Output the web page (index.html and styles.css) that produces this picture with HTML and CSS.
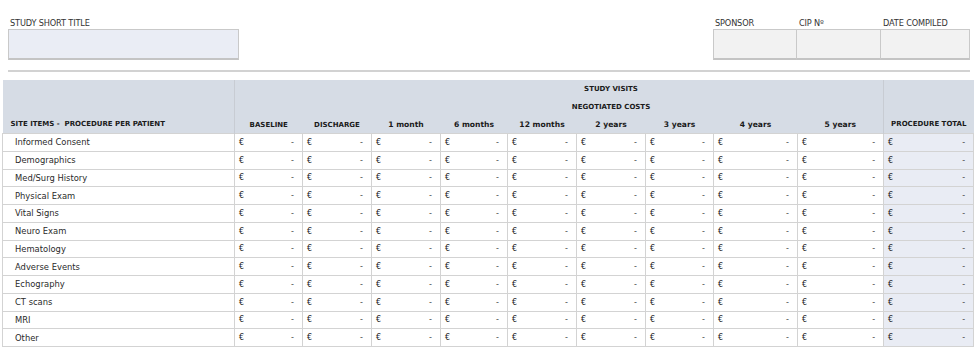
FILE: index.html
```html
<!DOCTYPE html>
<html>
<head>
<meta charset="utf-8">
<link rel="stylesheet" href="styles.css">
</head>
<body>
<div class="top">
  <div class="field title-field">
    <div class="label">STUDY SHORT TITLE</div>
    <div class="box title-box"></div>
  </div>
  <div class="meta">
    <div class="field">
      <div class="label">SPONSOR</div>
      <div class="box gray sponsor"></div>
    </div>
    <div class="field">
      <div class="label">CIP Nº</div>
      <div class="box gray cip"></div>
    </div>
    <div class="field">
      <div class="label">DATE COMPILED</div>
      <div class="box gray date"></div>
    </div>
  </div>
</div>
<div class="rule"></div>
<table class="costs">
  <colgroup>
    <col class="c-site">
    <col class="c68"><col class="c69"><col class="c69"><col class="c67"><col class="c69"><col class="c69"><col class="c68">
    <col class="c84"><col class="c86"><col class="c90">
  </colgroup>
  <thead>
    <tr class="h1">
      <th class="site-h" rowspan="3">SITE ITEMS -&nbsp; PROCEDURE PER PATIENT</th>
      <th class="group" colspan="9">STUDY VISITS</th>
      <th class="total-h" rowspan="3">PROCEDURE TOTAL</th>
    </tr>
    <tr class="h2">
      <th class="group" colspan="9">NEGOTIATED COSTS</th>
    </tr>
    <tr class="h3">
      <th>BASELINE</th><th>DISCHARGE</th><th class="lc">1 month</th><th class="lc">6 months</th><th class="lc">12 months</th><th class="lc">2 years</th><th class="lc">3 years</th><th class="lc">4 years</th><th class="lc">5 years</th>
    </tr>
  </thead>
  <tbody id="rows"></tbody>
</table>
<script src="app.js"></script>
</body>
</html>
```
FILE: app.js
```js
const items = ["Informed Consent","Demographics","Med/Surg History","Physical Exam","Vital Signs","Neuro Exam","Hematology","Adverse Events","Echography","CT scans","MRI","Other"];
const body = document.getElementById("rows");
items.forEach(name => {
  const tr = document.createElement("tr");
  let html = `<td class="item">${name}</td>`;
  for (let i = 0; i < 10; i++) {
    html += `<td class="money${i === 9 ? " total" : ""}"><span class="cur">€</span><span class="dash">-</span></td>`;
  }
  tr.innerHTML = html;
  body.appendChild(tr);
});
```
FILE: styles.css
```css
html, body {
  margin: 0;
  padding: 0;
  background: #fff;
}
body {
  font-family: "DejaVu Sans", "Liberation Sans", sans-serif;
  color: #2a2a2a;
}
.top {
  display: flex;
  justify-content: space-between;
  padding: 17px 10px 0 8px;
  height: 53px;
}
.label {
  font-size: 8.2px;
  line-height: 12px;
  padding-left: 2px;
  color: #333;
  letter-spacing: -0.15px;
}
.box {
  box-sizing: border-box;
  height: 31px;
  border: 1px solid #c9c9c9;
}
.title-box {
  width: 231px;
  background: #eaedf5;
  border-bottom: 2px solid #c4c4c4;
}
.meta {
  display: flex;
}
.gray {
  background: #f2f2f2;
  border-bottom: 2px solid #c4c4c4;
}
.meta .field + .field .box {
  border-left: none;
}
.sponsor { width: 84px; }
.cip { width: 84px; }
.date { width: 89px; }
.rule {
  margin: 0 10px 0 8px;
  height: 2px;
  background: #d2d2d2;
}
.costs {
  margin: 8px 0 0 2px;
  border-collapse: collapse;
  table-layout: fixed;
  width: 971px;
}
.c-site { width: 232px; }
.c68 { width: 68px; }
.c69 { width: 69px; }
.c67 { width: 67px; }
.c84 { width: 84px; }
.c86 { width: 86px; }
.c90 { width: 90px; }
thead th {
  background: #d6dce5;
  font-weight: bold;
  font-size: 7px;
  color: #1a1a1a;
  height: 18px;
  padding: 0;
  white-space: nowrap;
  text-align: center;
}
thead th.lc {
  font-size: 7.6px;
}
.h1 th, .h2 th { height: 18px; }
.h3 th { height: 17px; vertical-align: middle; }
th.site-h {
  text-align: left;
  vertical-align: bottom;
  padding: 0 0 5px 8px;
  border-right: 1px solid #c8ccd3;
}
th.total-h {
  vertical-align: bottom;
  padding-bottom: 5px;
  border-left: 1px solid #c8ccd3;
}
th.group {
  padding-left: 104px;
}
tbody td {
  border: 1px solid #d3d3d3;
  height: 16.75px;
  padding: 0;
  white-space: nowrap;
}
td.item {
  padding-left: 12px;
  color: #2a2a2a;
  font-size: 8.4px;
}
td.money {
  padding: 0 8px 0 4px;
  font-size: 8px;
  color: #222;
}
td.money .cur {
  float: left;
}
td.money .dash {
  float: right;
  color: #444;
}
td.total {
  background: #e9ecf4;
}
```
